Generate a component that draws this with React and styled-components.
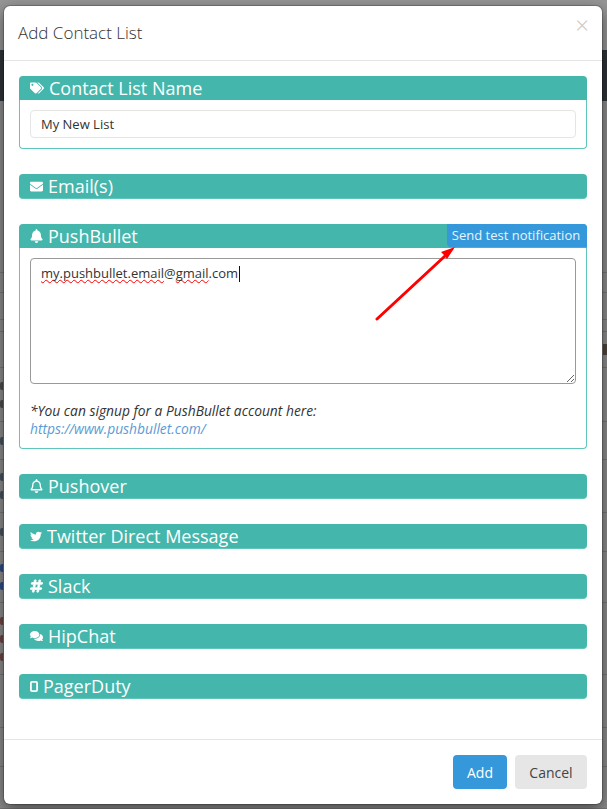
import styled, { createGlobalStyle } from 'styled-components'
import { FaTags, FaEnvelope, FaBell, FaRegBell, FaTwitter, FaHashtag, FaComments } from 'react-icons/fa'

// rows of the page dimmed behind the dialog, marks are the bits of its text that stick out at the edge
const pageRows = [
  { height: 172 },
  { height: 20 },
  { height: 27 },
  { height: 12 },
  { height: 36, right: true },
  { height: 54, marks: 2, dim: '#4c4c4c' },
  { height: 38, marks: 1, dim: '#46525e' },
  { height: 53, marks: 2, dim: '#46525e' },
  { height: 39, marks: 1, dim: '#46525e' },
  { height: 51, marks: 2, dim: '#2c4a86' },
  { height: 72, marks: 3, dim: '#6e4444' },
  { height: 53 },
  { height: 39 },
  { height: 42 },
]

const PagerIcon = () => (
  <svg width="8" height="11" viewBox="0 0 8 11">
    <rect x="0.9" y="0.9" width="6.2" height="9.2" rx="1.2" fill="none" stroke="#fff" strokeWidth="1.8" />
  </svg>
)

const ContactPanel = ({ icon, iconWidth, title, action, children }) => (
  <Panel>
    <PanelHeader $open={!!children}>
      <HeaderTitle>
        <IconSlot $width={iconWidth}>{icon}</IconSlot>
        <span>{title}</span>
      </HeaderTitle>
      {action}
    </PanelHeader>
    {children && <PanelBody>{children}</PanelBody>}
  </Panel>
)

const App = () => {
  return (
    <>
      <GlobalStyle />
      <Page>
        <TopSpace />
        <Navbar />
        {pageRows.map((row, i) => (
          <PageRow key={i} $height={row.height}>
            <EdgeMarks>
              {Array.from({ length: row.marks || 0 }, (_, j) => <EdgeMark key={j} $color={row.dim} />)}
            </EdgeMarks>
            {row.right && <RightMark />}
          </PageRow>
        ))}
      </Page>
      <Modal>
        <ModalHeader>
          <ModalTitle>Add Contact List</ModalTitle>
          <CloseButton>×</CloseButton>
        </ModalHeader>
        <ModalBody>
          <ContactPanel icon={<FaTags size={14} />} iconWidth={14} title="Contact List Name">
            <NameInput defaultValue="My New List" />
          </ContactPanel>
          <ContactPanel icon={<FaEnvelope size={13} />} iconWidth={13} title="Email(s)" />
          <ContactPanel
            icon={<FaBell size={14} />}
            iconWidth={13}
            title="PushBullet"
            action={<TestButton>Send test notification</TestButton>}
          >
            <EmailArea>
              <Misspelled>my.pushbullet.email</Misspelled>@<Misspelled>gmail</Misspelled>.com<Caret />
            </EmailArea>
            <HelpText>
              *You can signup for a PushBullet account here:<br />
              <HelpLink href="#">https://www.pushbullet.com/</HelpLink>
            </HelpText>
            <Arrow width="110" height="80" viewBox="0 0 110 80">
              <line x1="18" y1="75" x2="86" y2="12" stroke="#f00" strokeWidth="3" strokeLinecap="round" />
              <polygon points="96,3 82,8 85,11 88,15" fill="#f00" />
            </Arrow>
          </ContactPanel>
          <ContactPanel icon={<FaRegBell size={14} />} iconWidth={13} title="Pushover" />
          <ContactPanel icon={<FaTwitter size={13} />} iconWidth={12} title="Twitter Direct Message" />
          <ContactPanel icon={<BoldHash size={14} />} iconWidth={13} title="Slack" />
          <ContactPanel icon={<FaComments size={14} />} iconWidth={13} title="HipChat" />
          <ContactPanel icon={<PagerIcon />} iconWidth={8} title="PagerDuty" />
        </ModalBody>
        <ModalFooter>
          <AddButton>Add</AddButton>
          <CancelButton>Cancel</CancelButton>
        </ModalFooter>
      </Modal>
    </>
  )
}

export default App

const GlobalStyle = createGlobalStyle`
  html, body {
    margin: 0;
    height: 100%;
    overflow: hidden;
  }
  body {
    font-family: "Open Sans", "Liberation Sans", sans-serif;
    font-size: 13px;
    color: #333;
    background: #8c8c8c;
  }
  * {
    box-sizing: border-box;
  }
`
const Page = styled.div`
  height: 809px;
  overflow: hidden;
  background: #8c8c8c;
`
const TopSpace = styled.div`
  height: 50px;
  background: #969696;
`
const Navbar = styled.div`
  height: 51px;
  background: #2f3338;
`
const PageRow = styled.div`
  height: ${props => props.$height}px;
  border-bottom: 1px solid #777;
  display: flex;
  justify-content: space-between;
  align-items: center;
  overflow: hidden;
`
const EdgeMarks = styled.div`
  width: 4px;
  display: flex;
  flex-direction: column;
  gap: 10px;
`
const EdgeMark = styled.div`
  width: 3px;
  height: 8px;
  border-radius: 2px 0 0 2px;
  background: ${props => props.$color};
`
const RightMark = styled.div`
  width: 4px;
  height: 11px;
  background: #4e4438;
`
const Modal = styled.div`
  position: absolute;
  left: 4px;
  top: 6px;
  width: 598px;
  height: 798px;
  background: #fff;
  border-radius: 6px;
  box-shadow: 0 0 0 1px rgba(0, 0, 0, 0.2), 0 5px 15px rgba(0, 0, 0, 0.5);
  display: flex;
  flex-direction: column;
`
const ModalHeader = styled.div`
  height: 55px;
  flex: none;
  padding: 0 13px 0 14px;
  border-bottom: 1px solid #e5e5e5;
  display: flex;
  justify-content: space-between;
  align-items: center;
`
const ModalTitle = styled.h4`
  margin: 0;
  font-size: 17px;
  font-weight: 300;
  line-height: 54px;
`
const CloseButton = styled.span`
  margin: -16px 0 0;
  color: #c8c8c8;
  font-size: 24px;
  font-weight: 300;
  line-height: 24px;
`
const ModalBody = styled.div`
  flex: 1;
  padding: 15px 15px 0;
  display: flex;
  flex-direction: column;
  gap: 25px;
`
const Panel = styled.section`
  position: relative;
`
const PanelHeader = styled.div`
  height: ${props => (props.$open ? 24 : 25)}px;
  background: #45b6ac;
  border-radius: ${props => (props.$open ? '4px 4px 0 0' : '4px')};
  ${props => !props.$open && 'border-bottom: 1px solid #60c5bb;'}
  padding-left: 11px;
  display: flex;
  justify-content: space-between;
  color: #fff;
`
const HeaderTitle = styled.div`
  display: flex;
  align-items: center;
  gap: 5px;
  height: 24px;
  font-size: 18px;
  line-height: 24px;
  color: #fff;
`
const IconSlot = styled.span`
  width: ${props => props.$width}px;
  display: flex;
  justify-content: center;
  flex: none;
`
const BoldHash = styled(FaHashtag)`
  stroke: #fff;
  stroke-width: 28px;
`
const PanelBody = styled.div`
  padding: 10px;
  border: 1px solid #60c5bb;
  border-top: 0;
  border-radius: 0 0 4px 4px;
`
const NameInput = styled.input`
  display: block;
  width: 100%;
  height: 28px;
  padding: 0 10px;
  border: 1px solid #e5e5e5;
  border-radius: 4px;
  font: 13px "Open Sans", sans-serif;
  color: #333;
  outline: none;
`
const EmailArea = styled.div`
  height: 126px;
  padding: 5px 10px;
  border: 1px solid #999;
  border-radius: 4px;
  overflow: auto;
  resize: vertical;
  line-height: 18px;
`
const Misspelled = styled.span`
  text-decoration: underline wavy #f00 1px;
  text-underline-offset: 1px;
  text-decoration-skip-ink: none;
`
const Caret = styled.span`
  display: inline-block;
  width: 1px;
  height: 16px;
  margin-left: 1px;
  vertical-align: -4px;
  background: #111;
`
const HelpText = styled.p`
  margin: 18px 0 0;
  font-size: 13.8px;
  font-style: italic;
  line-height: 18px;
`
const HelpLink = styled.a`
  color: #5b9bd5;
  text-decoration: none;
`
const TestButton = styled.button`
  height: 23px;
  width: 140px;
  padding: 0 2px 2px 0;
  border: 0;
  border-radius: 0 4px 0 4px;
  background: #3498db;
  color: #e8f4fd;
  font: 13px "Open Sans", sans-serif;
`
const Arrow = styled.svg`
  position: absolute;
  left: 340px;
  top: 20px;
  pointer-events: none;
`
const ModalFooter = styled.div`
  flex: none;
  padding: 15px;
  border-top: 1px solid #e5e5e5;
  display: flex;
  justify-content: flex-end;
  gap: 8px;
`
const AddButton = styled.button`
  height: 34px;
  width: 54px;
  border: 0;
  border-radius: 4px;
  background: #3498db;
  color: #fff;
  font: 14px "Open Sans", sans-serif;
`
const CancelButton = styled(AddButton)`
  width: 72px;
  background: #e6e6e6;
  color: #444;
`
